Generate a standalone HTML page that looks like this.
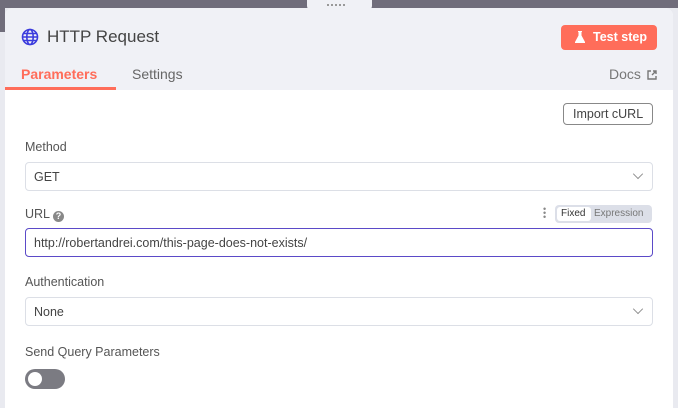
<!DOCTYPE html>
<html><head><style>
*{box-sizing:border-box;margin:0;padding:0}
body{width:678px;height:408px;overflow:hidden;background:#e9eaf0;font-family:"Liberation Sans",sans-serif;position:relative;color:#555}
.abs{position:absolute}
.lbl{position:absolute;left:25px;font-size:12.5px;color:#555}
.sel{position:absolute;left:25px;width:628px;height:29px;border:1px solid #dcdfe6;border-radius:4px;background:#fff;font-size:12.5px;color:#444;padding:7px 8px}
.chev{position:absolute;right:10px;width:8px;height:8px;border-right:1.3px solid #888;border-bottom:1.3px solid #888;transform:rotate(45deg) scale(.9);top:7px}
.dot{position:absolute;width:2px;height:2px;background:#999}
</style></head><body>
<div class="abs" style="left:0;top:0;width:678px;height:8px;background:#706d7b"></div>
<div class="abs" style="left:0;top:0;width:5px;height:32px;background:#706d7b"></div>
<div class="abs" style="left:672px;top:8px;width:6px;height:400px;background:#e9eaf0"></div>
<div class="abs" style="left:307px;top:0;width:65px;height:10px;background:#f0f1f6;border-radius:0 0 4px 4px"></div>
<div class="dot" style="left:327px;top:4px"></div><div class="dot" style="left:331px;top:4px"></div><div class="dot" style="left:335px;top:4px"></div><div class="dot" style="left:339px;top:4px"></div><div class="dot" style="left:343px;top:4px"></div>
<div class="dot" style="left:327px;top:8px"></div><div class="dot" style="left:331px;top:8px"></div><div class="dot" style="left:335px;top:8px"></div><div class="dot" style="left:339px;top:8px"></div><div class="dot" style="left:343px;top:8px"></div>
<div class="abs" style="left:5px;top:8px;width:668px;height:400px;background:#fff;border-radius:8px 8px 0 0;overflow:hidden">
  <div style="height:82px;background:#f0f1f6"></div>
</div>
<svg class="abs" style="left:21px;top:28px" width="18" height="18" viewBox="0 0 18 18" fill="none" stroke="#3b3bdd" stroke-width="1.6"><circle cx="9" cy="9" r="7.5"/><ellipse cx="9" cy="9" rx="3.2" ry="7.5"/><path d="M1.5 9h15M2.5 5.5h13M2.5 12.5h13"/></svg>
<div class="abs" style="left:47px;top:27px;font-size:17px;color:#444">HTTP Request</div>
<div class="abs" style="left:561px;top:25px;width:96px;height:25px;background:#ff6d5a;border-radius:4px;color:#fff;font-size:12.5px;font-weight:bold;padding:5px 0 0 32px">Test step</div>
<svg class="abs" style="left:575px;top:31px" width="10" height="12" viewBox="0 0 10 12"><path d="M3 0h4v1H6.5v3.5L10 11v1H0v-1l3.5-6.5V1H3z" fill="#fff"/></svg>
<div class="abs" style="left:21px;top:66px;font-size:14px;color:#ff6d5a;font-weight:bold">Parameters</div>
<div class="abs" style="left:5px;top:87px;width:111px;height:3px;background:#ff6d5a"></div>
<div class="abs" style="left:132px;top:66px;font-size:14px;color:#666">Settings</div>
<div class="abs" style="left:609px;top:66px;font-size:14px;color:#777">Docs</div>
<svg class="abs" style="left:647px;top:70px" width="10" height="10" viewBox="0 0 10 10" fill="none" stroke="#777" stroke-width="1.4"><path d="M4 1H1v8h8V6M5 5l4-4M6 1h3v3"/></svg>
<div class="abs" style="left:563px;top:103px;width:90px;height:22px;border:1px solid #888;border-radius:4px;font-size:12.5px;color:#444;padding:3px 0 0 9px">Import cURL</div>
<div class="lbl" style="top:140px">Method</div>
<div class="sel" style="top:162px">GET<div class="chev"></div></div>
<div class="lbl" style="top:207px">URL <span style="display:inline-block;width:11px;height:11px;border-radius:50%;background:#888;color:#fff;font-size:9px;text-align:center;line-height:11px;font-weight:bold;vertical-align:-1px">?</span></div>
<div class="abs" style="left:543px;top:207px;width:3px;font-size:9px;color:#888;line-height:4px">•<br>•<br>•</div>
<div class="abs" style="left:555px;top:205px;width:97px;height:18px;background:#dcdfe8;border-radius:4px;font-size:10px;color:#777"><span style="position:absolute;left:2px;top:2px;width:34px;height:14px;background:#fff;border-radius:3px;color:#333;padding:1px 0 0 4px">Fixed</span><span style="position:absolute;left:39px;top:3px">Expression</span></div>
<div class="sel" style="top:228px;border-color:#5b4ac8;color:#444">http://robertandrei.com/this-page-does-not-exists/</div>
<div class="lbl" style="top:275px">Authentication</div>
<div class="sel" style="top:297px">None<div class="chev"></div></div>
<div class="lbl" style="top:345px">Send Query Parameters</div>
<div class="abs" style="left:25px;top:369px;width:40px;height:20px;background:#7b7b82;border-radius:10px"><div style="position:absolute;left:3px;top:3px;width:14px;height:14px;background:#fff;border-radius:50%"></div></div>
</body></html>
